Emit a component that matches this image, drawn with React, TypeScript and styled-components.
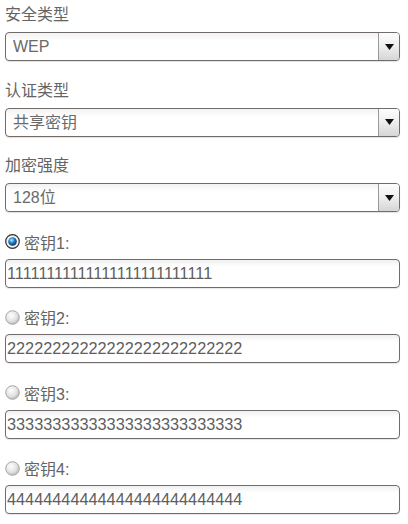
import React, { useState } from 'react'
import styled, { createGlobalStyle } from 'styled-components'

const GlobalStyle = createGlobalStyle`
    html, body {
        margin: 0;
        padding: 0;
        background: #ffffff;
    }
    body {
        font-family: "Liberation Sans", Arial, "Noto Sans CJK SC", sans-serif;
        font-size: 16px;
        color: #646464;
    }
`

const selects = [
    { label: '安全类型', options: ['WEP', 'WPA-PSK', 'WPA2-PSK'] },
    { label: '认证类型', options: ['共享密钥', '开放系统'] },
    { label: '加密强度', options: ['128位', '64位'] },
]

const keys = [
    '11111111111111111111111111',
    '22222222222222222222222222',
    '33333333333333333333333333',
    '44444444444444444444444444',
]

function RadioMark({ checked }: { checked: boolean }) {
    return (
        <svg width="15" height="15" viewBox="0 0 15 15">
            <defs>
                <radialGradient id="off" cx="40%" cy="35%" r="70%">
                    <stop offset="0%" stopColor="#ffffff" />
                    <stop offset="60%" stopColor="#e2e2e2" />
                    <stop offset="100%" stopColor="#b5b5b5" />
                </radialGradient>
                <radialGradient id="on" cx="40%" cy="35%" r="65%">
                    <stop offset="0%" stopColor="#c4e8ff" />
                    <stop offset="45%" stopColor="#2a8ad3" />
                    <stop offset="100%" stopColor="#083566" />
                </radialGradient>
            </defs>
            {checked ? (
                <>
                    <circle cx="7.5" cy="7.5" r="6.8" fill="#f2f2f2" stroke="#2f2f2f" strokeWidth="1.2" />
                    <circle cx="7.5" cy="7.5" r="4.3" fill="url(#on)" />
                </>
            ) : (
                <circle cx="7.5" cy="7.5" r="6.8" fill="url(#off)" stroke="#a6a6a6" strokeWidth="1" />
            )}
        </svg>
    )
}

export default function App() {
    const [active, setActive] = useState(0)

    return (
        <Page>
            <GlobalStyle />
            {selects.map((s) => (
                <Group key={s.label}>
                    <Label>{s.label}</Label>
                    <SelectBox>
                        <NativeSelect defaultValue={s.options[0]}>
                            {s.options.map((o) => (
                                <option key={o}>{o}</option>
                            ))}
                        </NativeSelect>
                        <ArrowButton>
                            <svg width="9" height="6" viewBox="0 0 9 6">
                                <path d="M0 0 H9 L4.5 6 Z" fill="#111" />
                            </svg>
                        </ArrowButton>
                    </SelectBox>
                </Group>
            ))}
            {keys.map((k, i) => (
                <Group key={i}>
                    <RadioLabel onClick={() => setActive(i)}>
                        <RadioMark checked={active === i} />
                        <span>密钥{i + 1}:</span>
                    </RadioLabel>
                    <KeyInput defaultValue={k} />
                </Group>
            ))}
        </Page>
    )
}

const Page = styled.div`
    display: flex;
    flex-direction: column;
    padding: 4px 8px 0 5px;
    width: 408px;
    box-sizing: border-box;
`

const Group = styled.div`
    display: flex;
    flex-direction: column;
    gap: 6px;
    margin-bottom: 18.5px;
`

const Label = styled.div`
    height: 22px;
    line-height: 22px;
    font-size: 16px;
    color: #646464;
`

const RadioLabel = styled.label`
    display: flex;
    align-items: center;
    gap: 4px;
    height: 22px;
    font-size: 16px;
    color: #646464;
    cursor: pointer;
`

const SelectBox = styled.div`
    display: flex;
    height: 29px;
    box-sizing: border-box;
    border: 1px solid #716c69;
    border-radius: 4px;
    background: linear-gradient(#f2f2f2, #ffffff 30%);
    box-shadow: 0 1px 1px rgba(0, 0, 0, 0.12);
    overflow: hidden;
`

const NativeSelect = styled.select`
    flex: 1;
    appearance: none;
    border: none;
    outline: none;
    background: transparent;
    padding: 0 0 0 7px;
    font-family: "Liberation Sans", Arial, "Noto Sans CJK SC", sans-serif;
    font-size: 16px;
    color: #6a6a6a;
`

const ArrowButton = styled.span`
    display: flex;
    align-items: center;
    justify-content: center;
    width: 20px;
    border-left: 1px solid #9a9a9a;
    background: linear-gradient(#fdfdfd, #f0f0f0 45%, #d6d6d6);
`

const KeyInput = styled.input`
    height: 29px;
    box-sizing: border-box;
    border: 1px solid #716c69;
    border-radius: 4px;
    padding: 0 1px;
    outline: none;
    background: linear-gradient(#f0f0f0, #ffffff 25%);
    box-shadow: 0 1px 1px rgba(0, 0, 0, 0.1);
    font-family: "Liberation Sans", Arial, sans-serif;
    font-size: 16.3px;
    color: #5e5e5e;
`
